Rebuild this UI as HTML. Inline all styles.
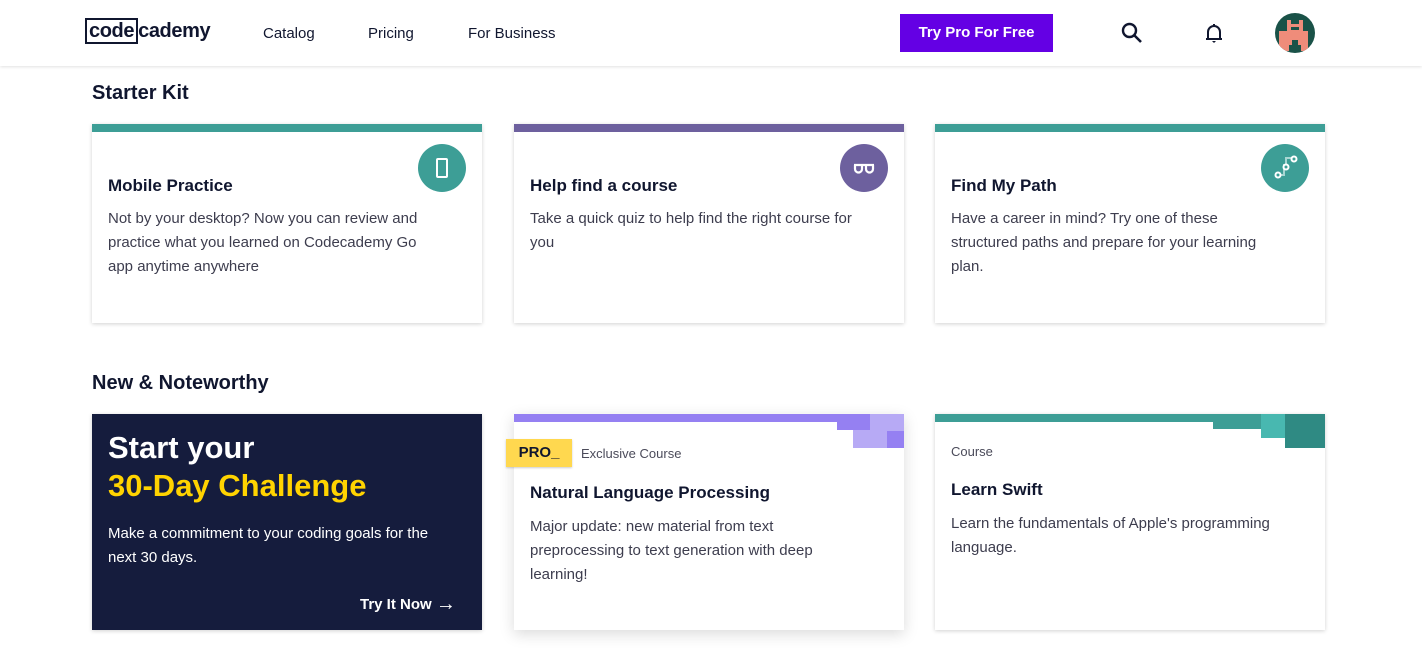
<!DOCTYPE html>
<html><head><meta charset="utf-8"><style>
*{box-sizing:border-box;margin:0;padding:0}
body{width:1422px;height:648px;overflow:hidden;background:#fff;font-family:"Liberation Sans",sans-serif;color:#10162f;position:relative}
.hdr{position:absolute;left:0;top:0;width:1422px;height:66px;background:#fff;box-shadow:0 1px 3px rgba(0,0,0,.12);z-index:5}
.logo{position:absolute;left:85px;top:18px;font-size:20px;font-weight:bold;color:#10162f;letter-spacing:-0.4px}
.logo span{border:2px solid #10162f;padding:0 2px;display:inline-block;line-height:22px}
.nav{position:absolute;top:25px;font-size:15px;color:#10162f}
.btn{position:absolute;left:900px;top:14px;width:153px;height:38px;background:#6400e4;color:#fff;font-size:15px;font-weight:bold;text-align:center;line-height:38px}
h2{position:absolute;left:92px;font-size:20px;font-weight:bold;color:#10162f}
.card{position:absolute;width:390px;background:#fff;box-shadow:0 1px 4px rgba(0,0,0,.18)}
.card .bar{height:8px}
.card h3{position:absolute;left:16px;font-size:17px;font-weight:bold;color:#10162f}
.card p{position:absolute;left:16px;width:368px;font-size:15px;line-height:24px;color:#3d3d4e;white-space:nowrap}
.ic{position:absolute;left:326px;top:20px;width:48px;height:48px;border-radius:50%}
.lbl{position:absolute;font-size:13px;color:#4b4b5a}
</style></head><body>
<div class="hdr">
<div class="logo"><span>code</span>cademy</div>
<div class="nav" style="left:263px">Catalog</div>
<div class="nav" style="left:368px">Pricing</div>
<div class="nav" style="left:468px">For Business</div>
<div class="btn">Try Pro For Free</div>
<svg style="position:absolute;left:1121px;top:22px" width="22" height="22" viewBox="0 0 22 22"><circle cx="8.5" cy="8.5" r="6.5" fill="none" stroke="#10162f" stroke-width="2.4"/><path d="M13 13l7 7" stroke="#10162f" stroke-width="2.6"/></svg>
<svg style="position:absolute;left:1204px;top:22px" width="20" height="22" viewBox="0 0 20 22"><path d="M10 2v2M4 17V10a6 6 0 0 1 12 0v7h2H2z" fill="none" stroke="#10162f" stroke-width="2"/><path d="M8 19h4l-2 2z" fill="#10162f"/></svg>
<svg style="position:absolute;left:1275px;top:13px" width="40" height="40" viewBox="0 0 40 40"><defs><clipPath id="c"><circle cx="20" cy="20" r="20"/></clipPath></defs><g clip-path="url(#c)"><rect width="40" height="40" fill="#1a5248"/><path d="M12 7h4v4h8V7h4v11h5v20H26v-6h-3v-5h-6v5h-3v6H4V18h8z" fill="#ef8c7a"/><rect x="16" y="14" width="8" height="3" fill="#1a5248"/></g></svg>
</div>

<h2 style="top:82px">Starter Kit</h2>
<div class="card" style="left:92px;top:124px;height:199px"><div class="bar" style="background:#3d9e96"></div>
<div class="ic" style="background:#3d9e96"><div style="position:absolute;left:18px;top:14px;width:12px;height:20px;border:2px solid #fff;border-radius:2px"></div></div>
<h3 style="top:52px">Mobile Practice</h3><p style="top:83px">Not by your desktop? Now you can review and<br>practice what you learned on Codecademy Go<br>app anytime anywhere</p></div>
<div class="card" style="left:514px;top:124px;height:199px"><div class="bar" style="background:#6d609e"></div>
<div class="ic" style="background:#6d609e"><svg width="48" height="48" viewBox="0 0 48 48"><path d="M14 21h20M15 21v4a3 3 0 0 0 7 0v-4M26 21v4a3 3 0 0 0 7 0v-4" fill="none" stroke="#fff" stroke-width="2.2"/></svg></div>
<h3 style="top:52px">Help find a course</h3><p style="top:83px">Take a quick quiz to help find the right course for<br>you</p></div>
<div class="card" style="left:935px;top:124px;height:199px"><div class="bar" style="background:#3d9e96"></div>
<div class="ic" style="background:#3d9e96"><svg width="48" height="48" viewBox="0 0 48 48"><path d="M17 31h6v-10h2v-7h9" fill="none" stroke="#a8d6d2" stroke-width="2"/><circle cx="17" cy="31" r="2.5" fill="#3d9e96" stroke="#fff" stroke-width="2"/><circle cx="25" cy="23" r="2.5" fill="#3d9e96" stroke="#fff" stroke-width="2"/><circle cx="33" cy="15" r="2.5" fill="#3d9e96" stroke="#fff" stroke-width="2"/></svg></div>
<h3 style="top:52px">Find My Path</h3><p style="top:83px">Have a career in mind? Try one of these<br>structured paths and prepare for your learning<br>plan.</p></div>

<h2 style="top:372px">New &amp; Noteworthy</h2>
<div class="card" style="left:92px;top:414px;height:216px;background:#151c3d">
<div style="position:absolute;left:16px;top:15px;font-size:31px;font-weight:bold;color:#fff;line-height:38px">Start your<br><span style="color:#ffd300">30-Day Challenge</span></div>
<p style="top:108px;color:#fff">Make a commitment to your coding goals for the<br>next 30 days.</p>
<div style="position:absolute;left:268px;top:178px;color:#fff;font-size:15px;font-weight:bold">Try It Now <span style="font-size:20px;position:relative;top:1px">→</span></div></div>
<div class="card" style="left:514px;top:414px;height:216px;box-shadow:0 4px 14px rgba(0,0,0,.15)"><div class="bar" style="background:#9580f2"></div>
<div style="position:absolute;left:323px;top:0;width:33px;height:16px;background:#9580f2"></div>
<div style="position:absolute;left:356px;top:0;width:34px;height:34px;background:#b7aaf5"></div>
<div style="position:absolute;left:339px;top:16px;width:17px;height:18px;background:#b7aaf5"></div>
<div style="position:absolute;left:373px;top:17px;width:17px;height:17px;background:#9580f2"></div>
<div style="position:absolute;left:-8px;top:25px;width:66px;height:28px;background:#ffd84f;font-weight:bold;font-size:15px;line-height:28px;text-align:center;color:#10162f;box-shadow:0 1px 2px rgba(0,0,0,.2)">PRO_</div>
<div class="lbl" style="left:67px;top:32px">Exclusive Course</div>
<h3 style="top:69px">Natural Language Processing</h3><p style="top:101px">Major update: new material from text<br>preprocessing to text generation with deep<br>learning!</p></div>
<div class="card" style="left:935px;top:414px;height:216px"><div class="bar" style="background:#3d9e96"></div>
<div style="position:absolute;left:278px;top:0;width:50px;height:15px;background:#3d9e96"></div>
<div style="position:absolute;left:326px;top:0;width:24px;height:24px;background:#48b8b0"></div>
<div style="position:absolute;left:350px;top:0;width:40px;height:34px;background:#2f8a83"></div>
<div class="lbl" style="left:16px;top:30px">Course</div>
<h3 style="top:66px">Learn Swift</h3><p style="top:98px">Learn the fundamentals of Apple's programming<br>language.</p></div>
</body></html>
